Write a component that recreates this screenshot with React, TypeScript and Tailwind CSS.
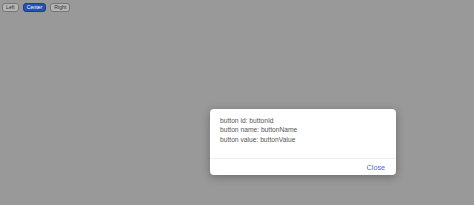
export default function App() {
  return (
    <div className="relative h-[205px] w-[474px] overflow-hidden bg-[#999999] font-['Liberation_Sans',Arial,sans-serif]">
      <div className="flex items-center gap-[4px] pl-[2px] pt-[3px]">
        <button className="h-[9px] rounded-[3px] border border-[#777] bg-[#b5b5b5] px-[3px] text-[5.2px] leading-none text-[#333]">
          Left
        </button>
        <button className="h-[9px] rounded-[3px] border border-[#1b3f8f] bg-[#2452b0] px-[3px] text-[5.2px] leading-none text-white">
          Center
        </button>
        <button className="h-[9px] rounded-[3px] border border-[#777] bg-[#b5b5b5] px-[3px] text-[5.2px] leading-none text-[#333]">
          Right
        </button>
      </div>

      {/* dialog */}
      <div className="absolute left-[210px] top-[109px] w-[186px] rounded-[4px] bg-white shadow-[0_2px_8px_rgba(0,0,0,0.3)]">
        <div className="h-[49px] px-[10px] pt-[7px] text-[6.7px] leading-[9.3px] text-[#555]">
          <p>button id: buttonId</p>
          <p>button name: buttonName</p>
          <p>button value: buttonValue</p>
        </div>
        <div className="flex h-[17px] items-center justify-end border-t border-[#eee] pr-[11px] pt-[2px]">
          <span className="text-[7.2px] text-[#3a6ee6]">Close</span>
        </div>
      </div>
    </div>
  );
}
